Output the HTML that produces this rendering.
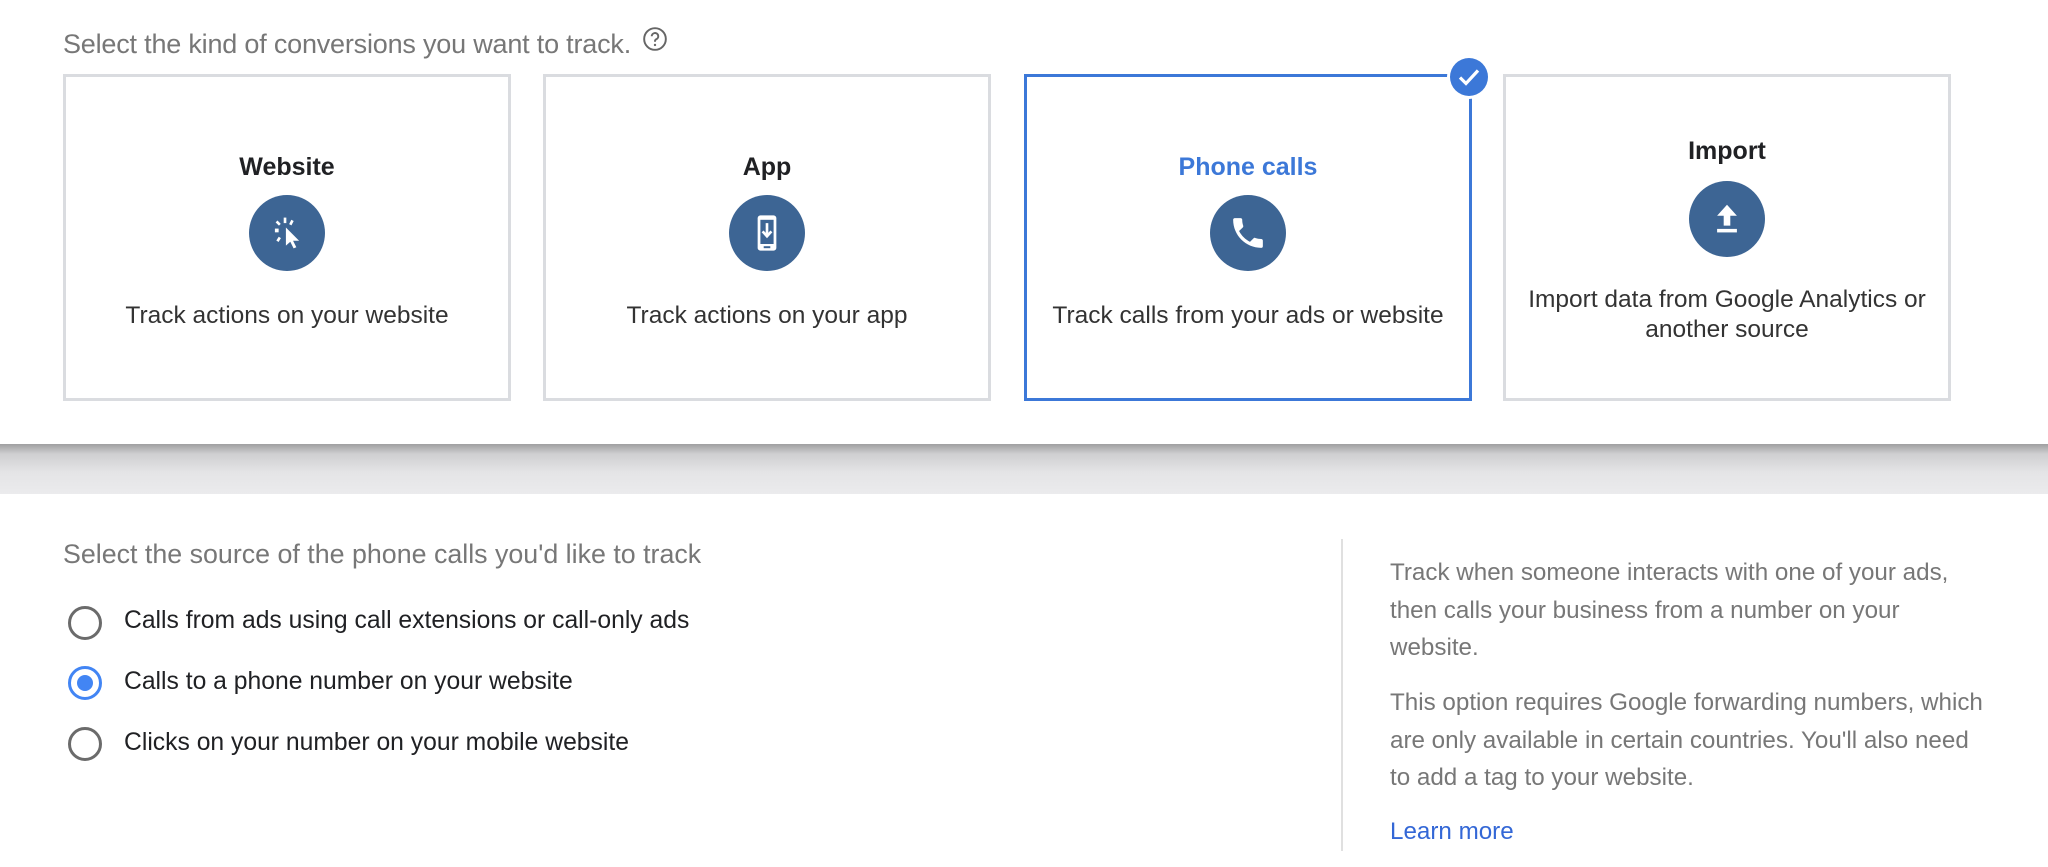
<!DOCTYPE html>
<html><head><meta charset="utf-8">
<style>
*{margin:0;padding:0;box-sizing:border-box}
body{width:2048px;height:867px;background:#fff;font-family:"Liberation Sans",Arial,sans-serif;position:relative;overflow:hidden}
.abs{position:absolute}
.h1{left:63px;top:26px;font-size:27px;color:#777;letter-spacing:-0.2px}
.card{position:absolute;top:74px;width:448px;height:327px;border:3px solid #dadce0;background:#fff;text-align:center}
.card.sel{border-color:#3c78d8}
.t{position:absolute;left:0;right:0;font-size:25px;font-weight:bold;color:#202124}
.c{position:absolute;left:50%;width:76px;height:76px;margin-left:-38px;border-radius:50%;background:#3d6594}
.c svg{position:absolute;left:16px;top:16px}
.d{position:absolute;left:0;right:0;font-size:24.5px;color:#333;line-height:30px}
.band{left:0;top:444px;width:2048px;height:50px;background:linear-gradient(#9f9fa0 0,#cfcfd1 10px,#e4e4e6 28px,#ebebed 50px)}
.h2{left:63px;top:539px;font-size:26.8px;color:#777}
.r{position:absolute;left:68px;width:34px;height:34px;border-radius:50%;border:3px solid #6b6b6b}
.r.on{border-color:#4285f4}
.r.on:after{content:"";position:absolute;left:6px;top:6px;width:16px;height:16px;border-radius:50%;background:#4285f4}
.o{position:absolute;left:124px;font-size:24.7px;color:#202124}
.div{left:1341px;top:539px;width:2px;height:312px;background:#e0e0e0}
.p{left:1390px;width:650px;font-size:24.2px;color:#777;line-height:37.5px}
</style></head><body>
<div class="abs h1">Select the kind of conversions you want to track. <svg width="26" height="26" viewBox="0 0 24 24" style="vertical-align:1px;margin-left:4px"><circle cx="12" cy="12" r="10" fill="none" stroke="#666" stroke-width="1.8"/><path d="M9 9.5a3 3 0 1 1 4 2.8c-.8.4-1 .9-1 1.7v.5" fill="none" stroke="#666" stroke-width="1.8"/><circle cx="12" cy="17.5" r="1.1" fill="#666"/></svg></div>

<div class="card" style="left:63px">
 <div class="t" style="top:76px">Website</div>
 <div class="c" style="top:118px"><svg width="44" height="44" viewBox="0 0 40 40"><path d="M19 15 L31 27 L25.5 27 L28.5 33 L26 34 L23 28 L19 31.5 Z" fill="#fff"/><rect x="17" y="6" width="2.4" height="5" fill="#fff"/><rect x="9" y="16" width="3.4" height="3.4" fill="#fff"/><path d="M10.5 9.5l3 3" stroke="#fff" stroke-width="2.4"/><path d="M25 8.5l-2 4" stroke="#fff" stroke-width="2.4"/><path d="M13.5 24l-2.2 3.5" stroke="#fff" stroke-width="2.4"/></svg></div>
 <div class="d" style="top:224px">Track actions on your website</div>
</div>
<div class="card" style="left:543px">
 <div class="t" style="top:76px">App</div>
 <div class="c" style="top:118px"><svg width="44" height="44" viewBox="0 0 40 40"><rect x="11.5" y="4" width="17" height="32" rx="2.5" fill="#fff"/><rect x="14" y="8" width="12" height="22" fill="#3d6594"/><rect x="17" y="32" width="6" height="1.8" fill="#3d6594"/><path d="M20 11v11M16 18.5l4 4.5 4-4.5" stroke="#fff" stroke-width="2.4" fill="none"/></svg></div>
 <div class="d" style="top:224px">Track actions on your app</div>
</div>
<div class="card sel" style="left:1024px">
 <div class="t" style="top:76px;color:#3c78d8">Phone calls</div>
 <div class="c" style="top:118px"><svg width="44" height="44" viewBox="0 0 24 24"><path transform="translate(1.2 1.2) scale(0.9)" d="M6.6 10.8c1.4 2.8 3.8 5.1 6.6 6.6l2.2-2.2c.3-.3.7-.4 1-.2 1.1.4 2.3.6 3.6.6.6 0 1 .4 1 1V20c0 .6-.4 1-1 1C10.6 21 3 13.4 3 4c0-.6.4-1 1-1h3.5c.6 0 1 .4 1 1 0 1.3.2 2.5.6 3.6.1.3 0 .7-.2 1z" fill="#fff"/></svg></div>
 <div class="d" style="top:224px">Track calls from your ads or website</div>
</div>
<div class="abs" style="left:1447px;top:55px;width:44px;height:44px;border-radius:50%;background:#fff"></div>
<div class="abs" style="left:1450px;top:58px;width:38px;height:38px;border-radius:50%;background:#3c78d8"><svg width="38" height="38" viewBox="0 0 38 38"><path d="M10 19.5l6 6 12-13" stroke="#fff" stroke-width="3.2" fill="none"/></svg></div>
<div class="card" style="left:1503px">
 <div class="t" style="top:60px">Import</div>
 <div class="c" style="top:104px"><svg width="44" height="44" viewBox="0 0 40 40"><path d="M20 7l-9 10h6v9h6v-9h6z" fill="#fff"/><rect x="11" y="29" width="18" height="3.2" fill="#fff"/></svg></div>
 <div class="d" style="top:208px">Import data from Google Analytics or<br>another source</div>
</div>

<div class="abs band"></div>

<div class="abs h2">Select the source of the phone calls you'd like to track</div>
<div class="r" style="top:606px"></div><div class="o" style="top:607px">Calls from ads using call extensions or call-only ads</div>
<div class="r on" style="top:666px"></div><div class="o" style="top:668px">Calls to a phone number on your website</div>
<div class="r" style="top:727px"></div><div class="o" style="top:729px">Clicks on your number on your mobile website</div>

<div class="abs div"></div>
<div class="abs p" style="top:554px">Track when someone interacts with one of your ads,<br>then calls your business from a number on your<br>website.</div>
<div class="abs p" style="top:684px">This option requires Google forwarding numbers, which<br>are only available in certain countries. You'll also need<br>to add a tag to your website.</div>
<div class="abs p" style="top:813px;color:#3367d6">Learn more</div>
</body></html>
